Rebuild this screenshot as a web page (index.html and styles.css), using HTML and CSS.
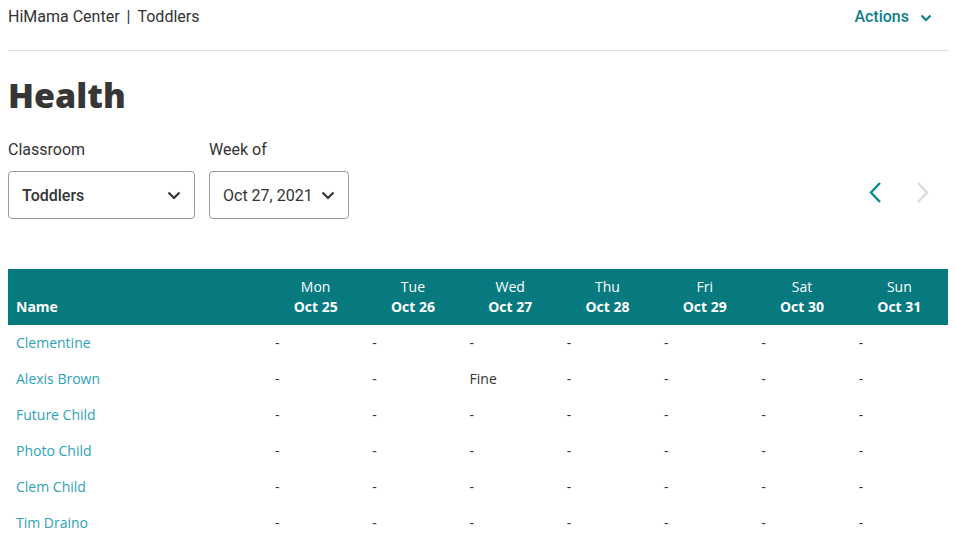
FILE: index.html
```html
<!DOCTYPE html>
<html>
<head>
<meta charset="utf-8">
<link rel="stylesheet" href="styles.css">
</head>
<body>
<header class="topbar">
  <div class="crumbs">HiMama Center<span class="sep">|</span>Toddlers</div>
  <button class="actions">Actions
    <svg class="chev-sm" width="12" height="8" viewBox="0 0 12 8"><path d="M1.5 1.5 L6 6 L10.5 1.5" fill="none" stroke="currentColor" stroke-width="2.2"/></svg>
  </button>
</header>
<h1 class="title">Health</h1>
<div class="filters">
  <div class="field">
    <label class="label">Classroom</label>
    <div class="select sel-class"><span class="sel-text strong">Toddlers</span>
      <svg width="14" height="9" viewBox="0 0 14 9"><path d="M1.5 1.5 L7 7 L12.5 1.5" fill="none" stroke="#333" stroke-width="2.2"/></svg>
    </div>
  </div>
  <div class="field">
    <label class="label">Week of</label>
    <div class="select sel-week"><span class="sel-text">Oct 27, 2021</span>
      <svg width="14" height="9" viewBox="0 0 14 9"><path d="M1.5 1.5 L7 7 L12.5 1.5" fill="none" stroke="#333" stroke-width="2.2"/></svg>
    </div>
  </div>
  <div class="nav">
    <svg class="nav-btn" width="14" height="21" viewBox="0 0 14 21"><path d="M12 1 L3 10.5 L12 20" fill="none" stroke="#0d8790" stroke-width="2.4"/></svg>
    <svg class="nav-btn" width="14" height="21" viewBox="0 0 14 21"><path d="M2 1 L11 10.5 L2 20" fill="none" stroke="#dcdcdc" stroke-width="2.4"/></svg>
  </div>
</div>
<table class="grid">
  <colgroup>
    <col class="c-name"><col class="c-day"><col class="c-day"><col class="c-day"><col class="c-day"><col class="c-day"><col class="c-day"><col class="c-day">
  </colgroup>
  <thead>
    <tr>
      <th class="name-col">Name</th>
      <th><span class="day">Mon</span><br>Oct 25</th>
      <th><span class="day">Tue</span><br>Oct 26</th>
      <th><span class="day">Wed</span><br>Oct 27</th>
      <th><span class="day">Thu</span><br>Oct 28</th>
      <th><span class="day">Fri</span><br>Oct 29</th>
      <th><span class="day">Sat</span><br>Oct 30</th>
      <th><span class="day">Sun</span><br>Oct 31</th>
    </tr>
  </thead>
  <tbody>
    <tr><td><a class="child">Clementine</a></td><td>-</td><td>-</td><td>-</td><td>-</td><td>-</td><td>-</td><td>-</td></tr>
    <tr><td><a class="child">Alexis Brown</a></td><td>-</td><td>-</td><td>Fine</td><td>-</td><td>-</td><td>-</td><td>-</td></tr>
    <tr><td><a class="child">Future Child</a></td><td>-</td><td>-</td><td>-</td><td>-</td><td>-</td><td>-</td><td>-</td></tr>
    <tr><td><a class="child">Photo Child</a></td><td>-</td><td>-</td><td>-</td><td>-</td><td>-</td><td>-</td><td>-</td></tr>
    <tr><td><a class="child">Clem Child</a></td><td>-</td><td>-</td><td>-</td><td>-</td><td>-</td><td>-</td><td>-</td></tr>
    <tr><td><a class="child">Tim Draino</a></td><td>-</td><td>-</td><td>-</td><td>-</td><td>-</td><td>-</td><td>-</td></tr>
  </tbody>
</table>
</body>
</html>
```
FILE: styles.css
```css
html, body { background: #fff; }
body {
  margin: 0 8px;
  font-family: Roboto, "Liberation Sans", sans-serif;
  color: #333;
}
.topbar {
  display: flex;
  justify-content: space-between;
  align-items: flex-start;
  height: 51px;
  border-bottom: 1px solid #dcdcdc;
  box-sizing: border-box;
}
.crumbs {
  font-size: 16px;
  line-height: 20px;
  padding-top: 7px;
  color: #333;
}
.sep { margin: 0 7px; }
.actions {
  display: flex;
  align-items: center;
  gap: 11px;
  background: none;
  border: 0;
  padding: 7px 16px 0 0;
  font-family: Roboto, sans-serif;
  font-size: 16px;
  font-weight: 500;
  line-height: 20px;
  color: #0b8088;
}
.chev-sm { margin-top: 2px; }
.title {
  font-family: "Open Sans", sans-serif;
  font-weight: 800;
  font-size: 34px;
  line-height: 44px;
  margin: 22px 0 0;
  color: #363636;
}
.filters {
  display: flex;
  align-items: flex-end;
  gap: 14px;
  margin-top: 23px;
}
.field { display: flex; flex-direction: column; }
.label {
  font-size: 16px;
  line-height: 20px;
  font-weight: 400;
  color: #333;
  margin-bottom: 11px;
}
.select {
  height: 48px;
  box-sizing: border-box;
  border: 1px solid #9a9a9a;
  border-radius: 4px;
  display: flex;
  align-items: center;
  justify-content: space-between;
  padding: 0 13px 0 13px;
  font-size: 16px;
  color: #333;
}
.sel-class { width: 187px; }
.sel-week { width: 140px; }
.strong { font-weight: 500; }
.nav {
  margin-left: auto;
  display: flex;
  gap: 34px;
  align-self: center;
  margin-top: 26px;
  padding-right: 18px;
}
.grid {
  margin-top: 50px;
  width: 940px;
  border-collapse: collapse;
  font-family: "Open Sans", sans-serif;
  font-size: 14px;
  table-layout: fixed;
}
.c-name { width: 259px; }
.c-day { width: 97.28px; }
.grid th {
  background: #077a80;
  color: #fff;
  font-weight: 700;
  text-align: center;
  line-height: 20px;
  padding: 8px 8px 8px;
  vertical-align: bottom;
}
.grid th.name-col { text-align: left; }
.day { font-weight: 400; }
.grid td {
  height: 36px;
  padding: 0 8px;
  line-height: 20px;
  color: #333;
  vertical-align: middle;
}
.child { color: #2ea2b9; text-decoration: none; }
```
